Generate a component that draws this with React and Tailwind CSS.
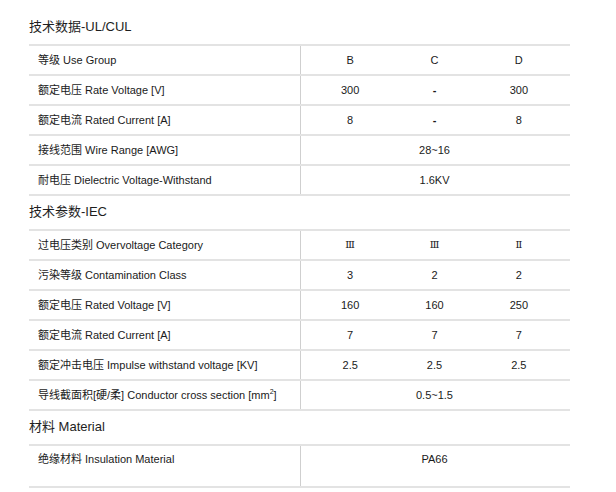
const font = {
  fontFamily: '"Liberation Sans", "Noto Sans CJK SC", sans-serif',
};

const ul = [
  { label: "等级 Use Group", values: ["B", "C", "D"] },
  { label: "额定电压 Rate Voltage [V]", values: ["300", "-", "300"] },
  { label: "额定电流 Rated Current [A]", values: ["8", "-", "8"] },
  { label: "接线范围 Wire Range [AWG]", span: "28~16" },
  { label: "耐电压 Dielectric Voltage-Withstand", span: "1.6KV" },
];

const iec = [
  { label: "过电压类别 Overvoltage Category", values: ["Ⅲ", "Ⅲ", "Ⅱ"], roman: true },
  { label: "污染等级 Contamination Class", values: ["3", "2", "2"] },
  { label: "额定电压 Rated Voltage [V]", values: ["160", "160", "250"] },
  { label: "额定电流 Rated Current [A]", values: ["7", "7", "7"] },
  { label: "额定冲击电压 Impulse withstand voltage [KV]", values: ["2.5", "2.5", "2.5"] },
  {
    label: (
      <>
        导线截面积[硬/柔] Conductor cross section [mm<sup className="text-[7px]">2</sup>]
      </>
    ),
    span: "0.5~1.5",
  },
];

const Title = ({ children, first }) => (
  <div
    className={
      "text-[13px] leading-[18px] text-[#1e1e1e] pb-[8px] " +
      (first ? "pt-[18px]" : "pt-[7px]")
    }
  >
    {children}
  </div>
);

const Row = ({ row, tall }) => (
  <div
    className={
      "flex border-b-2 border-[#e3e3e3] text-[11px] leading-[16px] text-[#1a1a1a] " +
      (tall ? "h-[42px]" : "h-[30px]")
    }
  >
    <div
      className={
        "w-[271px] pl-[9px] flex " + (tall ? "items-start pt-[5px]" : "items-center")
      }
    >
      {row.label}
    </div>
    <div
      className={
        "flex-1 border-l border-[#cfcfcf] pl-[7px] pr-[9px] flex " +
        (tall ? "items-start pt-[5px]" : "items-center")
      }
    >
      {row.values ? (
        <div className="grid grid-cols-3 w-full text-center">
          {row.values.map((v, i) => (
            <div
              key={i}
              className={
                v === "-"
                  ? "font-bold"
                  : row.roman
                  ? "font-['DejaVu_Serif','Liberation_Serif',serif] text-[10px]"
                  : ""
              }
            >
              {v}
            </div>
          ))}
        </div>
      ) : (
        <div className="w-full text-center">{row.span}</div>
      )}
    </div>
  </div>
);

const Table = ({ rows, tall }) => (
  <div className="border-t-2 border-[#e3e3e3]">
    {rows.map((r, i) => (
      <Row key={i} row={r} tall={tall} />
    ))}
  </div>
);

export default function App() {
  return (
    <div className="w-[616px] h-[492px] bg-white pl-[29px] pr-[46px]" style={font}>
      <Title first>技术数据-UL/CUL</Title>
      <Table rows={ul} />
      <Title>技术参数-IEC</Title>
      <Table rows={iec} />
      <Title>材料 Material</Title>
      <Table rows={[{ label: "绝缘材料 Insulation Material", span: "PA66" }]} tall />
    </div>
  );
}
